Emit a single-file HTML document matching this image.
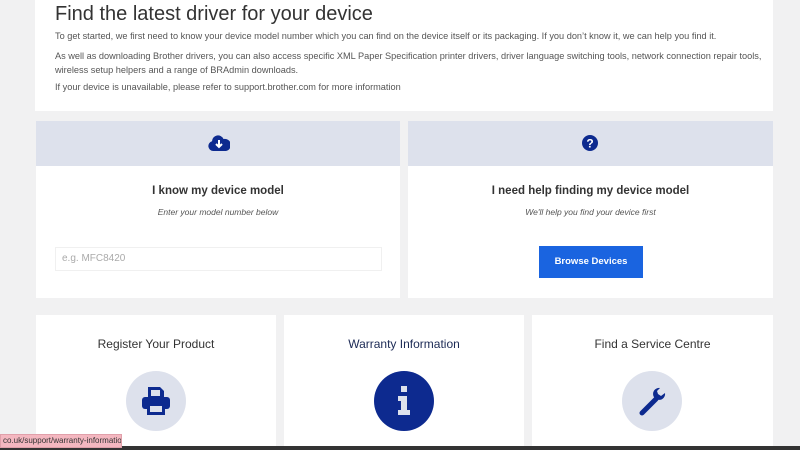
<!DOCTYPE html><html style="overflow:hidden;height:450px"><head><style>
body{margin:0;width:800px;height:450px;background:#f1f1f2;font-family:"Liberation Sans",sans-serif;position:relative;overflow:hidden}
.a{position:absolute;background:#fff}
.t{position:absolute;margin:0}
p.s{position:absolute;margin:0;font-size:9.2px;color:#555;left:55px;line-height:14px;width:720px}
.hd{position:absolute;left:0;right:0;top:0;height:45px;background:#dde1ec}
.c{position:absolute;left:0;right:0;text-align:center}
.circ{position:absolute;width:60px;height:60px;border-radius:50%;top:56px;left:90px}
</style></head><body>
<div class="a" style="left:35px;top:0;width:738px;height:111px"></div>
<div class="t" style="left:55px;top:3px;font-size:20px;color:#333">Find the latest driver for your device</div>
<p class="s" style="top:29px">To get started, we first need to know your device model number which you can find on the device itself or its packaging. If you don’t know it, we can help you find it.</p>
<p class="s" style="top:49px">As well as downloading Brother drivers, you can also access specific XML Paper Specification printer drivers, driver language switching tools, network connection repair tools, wireless setup helpers and a range of BRAdmin downloads.</p>
<p class="s" style="top:80px">If your device is unavailable, please refer to support.brother.com for more information</p>

<div class="a" style="left:36px;top:121px;width:364px;height:177px">
<div class="hd"></div>
<svg style="position:absolute;left:172px;top:14px" width="22" height="17" viewBox="0 0 22 17"><path d="M5 16a5 5 0 0 1-1-9.8A6 6 0 0 1 15.5 4 4.5 4.5 0 0 1 18 16z" fill="#0d2a8f"/><path d="M11 5v6M8 9l3 3 3-3" stroke="#fff" stroke-width="2" fill="none"/></svg>
<div class="c" style="top:64px;font-size:11.5px;font-weight:bold;color:#333">I know my device model</div>
<div class="c" style="top:86px;font-size:8.5px;font-style:italic;color:#555">Enter your model number below</div>
<div style="position:absolute;left:19px;top:126px;width:325px;height:22px;border:1px solid #f0f0f0"><span style="position:absolute;left:6px;top:5px;font-size:10px;color:#aaa">e.g. MFC8420</span></div>
</div>
<div class="a" style="left:408px;top:121px;width:365px;height:177px">
<div class="hd"></div>
<svg style="position:absolute;left:174px;top:14px" width="16" height="16" viewBox="0 0 16 16"><circle cx="8" cy="8" r="8" fill="#0d2a8f"/><text x="8" y="12.5" font-size="12" font-weight="bold" fill="#fff" text-anchor="middle" font-family="Liberation Sans">?</text></svg>
<div class="c" style="top:64px;font-size:11.5px;font-weight:bold;color:#333">I need help finding my device model</div>
<div class="c" style="top:86px;font-size:8.5px;font-style:italic;color:#555">We'll help you find your device first</div>
<div style="position:absolute;left:131px;top:125px;width:104px;height:32px;background:#1a64e0;color:#fff;font-size:9.5px;font-weight:bold;text-align:center;line-height:32px">Browse Devices</div>
</div>

<div class="a" style="left:36px;top:315px;width:240px;height:135px">
<div class="c" style="top:22px;font-size:12px;color:#333">Register Your Product</div>
<div class="circ" style="background:#dde1ec"></div>
<svg style="position:absolute;left:103px;top:70px" width="34" height="32" viewBox="0 0 34 32"><path d="M9 2h12l4 4v6H9z" fill="#0d2a8f"/><rect x="12" y="5" width="9" height="6" fill="#dde1ec"/><rect x="3" y="12" width="28" height="12" rx="3" fill="#0d2a8f"/><rect x="8" y="18" width="18" height="12" fill="#0d2a8f"/><rect x="11" y="21" width="12" height="6" fill="#dde1ec"/></svg>
</div>
<div class="a" style="left:284px;top:315px;width:240px;height:135px">
<div class="c" style="top:22px;font-size:12px;color:#1c2a55">Warranty Information</div>
<div class="circ" style="background:#0d2a8f"></div>
<svg style="position:absolute;left:110px;top:70px" width="20" height="32" viewBox="0 0 20 32"><rect x="7" y="1" width="6" height="6" fill="#dde1ec"/><path d="M4 11h9v14h3v5H4v-5h3v-9H4z" fill="#dde1ec"/></svg>
</div>
<div class="a" style="left:532px;top:315px;width:241px;height:135px">
<div class="c" style="top:22px;font-size:12px;color:#333">Find a Service Centre</div>
<div class="circ" style="background:#dde1ec"></div>
<svg style="position:absolute;left:104px;top:70px" width="32" height="32" viewBox="0 0 32 32"><path d="M6 28l14-14" stroke="#0d2a8f" stroke-width="5" stroke-linecap="round"/><path d="M24 3a6 6 0 1 0 5 5l-4 3-3-2-1-3z" fill="#0d2a8f"/></svg>
</div>

<div style="position:absolute;left:0;top:446px;width:800px;height:4px;background:#333"></div>
<div style="position:absolute;left:0;top:434px;width:122px;height:14px;background:#f4b7c0;border:1px solid #e0a0aa;font-size:8px;color:#333;line-height:12px;padding-left:2px;box-sizing:border-box;white-space:nowrap;overflow:hidden">co.uk/support/warranty-information</div>
</body></html>
